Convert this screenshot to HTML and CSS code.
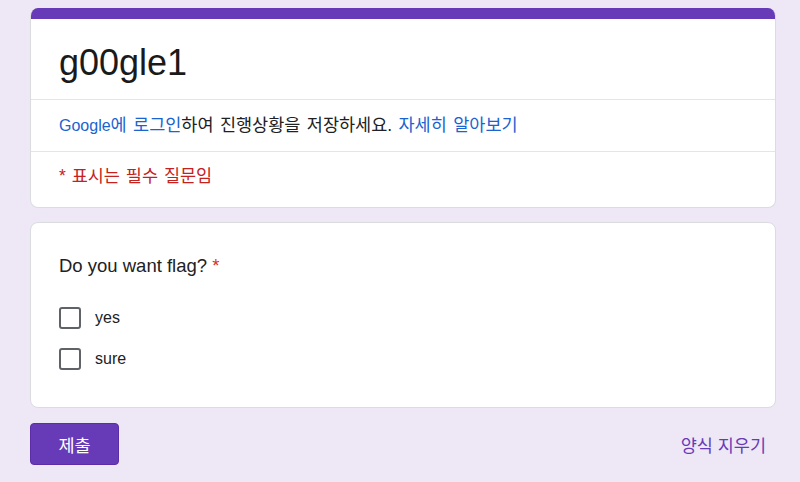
FILE: index.html
```html
<!DOCTYPE html>
<html lang="ko">
<head>
<meta charset="utf-8">
<title>g00gle1</title>
<link rel="stylesheet" href="styles.css">
</head>
<body>
<main class="form">
  <section class="card header-card">
    <div class="accent"></div>
    <div class="title-row">
      <h1 class="title">g00gle1</h1>
    </div>
    <div class="login-row">
      <a class="link" href="#"><span class="latin">Google</span>에 로그인</a>하여 진행상황을 저장하세요. <a class="link" href="#">자세히 알아보기</a>
    </div>
    <div class="required-row">* 표시는 필수 질문임</div>
  </section>

  <section class="card question-card">
    <div class="question">Do you want flag? <span class="star">*</span></div>
    <div class="options">
      <label class="option"><span class="box"></span><span class="opt-text">yes</span></label>
      <label class="option"><span class="box"></span><span class="opt-text">sure</span></label>
    </div>
  </section>

  <div class="actions">
    <button class="submit" type="button">제출</button>
    <a class="clear" href="#">양식 지우기</a>
  </div>
</main>
</body>
</html>
```

FILE: styles.css
```css
* { box-sizing: border-box; }

html, body {
  margin: 0;
  padding: 0;
  background: #ede7f6;
}

body {
  font-family: "Liberation Sans", Arial, "Noto Sans CJK KR", sans-serif;
  color: #202124;
  width: 800px;
  height: 482px;
  overflow: hidden;
}

.form {
  width: 746px;
  margin-left: 30px;
  padding-top: 8px;
  display: flex;
  flex-direction: column;
}

.card {
  background: #fff;
  border: 1px solid #dadce0;
  border-radius: 8px;
  overflow: hidden;
}

.header-card {
  border-top: 0;
}

.accent {
  height: 11px;
  background: #673ab7;
  margin: 0 -1px;
}

.title-row {
  padding: 20px 28px 12px;
  border-bottom: 1px solid #e5e4ea;
}

.title {
  margin: 0;
  font-size: 36px;
  line-height: 48px;
  font-weight: 400;
  color: #1a1a1a;
}

.login-row {
  padding: 13px 28px 13px;
  font-size: 17.5px;
  line-height: 24px;
  word-spacing: 1.5px;
  border-bottom: 1px solid #e5e4ea;
  color: #202124;
}

.latin {
  font-size: 16px;
}

.link {
  color: #1a63d0;
  text-decoration: none;
}

.required-row {
  padding: 12px 28px 19px;
  font-size: 17.5px;
  line-height: 24px;
  word-spacing: 1px;
  color: #c5221f;
}

.question-card {
  margin-top: 14px;
  padding: 31px 28px 37px;
}

.question {
  font-size: 18.5px;
  line-height: 24px;
  color: #202124;
}

.star {
  color: #d93025;
}

.options {
  margin-top: 29px;
  display: flex;
  flex-direction: column;
  gap: 19px;
}

.option {
  display: flex;
  align-items: center;
  gap: 14px;
  height: 22px;
  font-size: 16px;
  color: #202124;
}

.box {
  width: 22px;
  height: 22px;
  border: 2px solid #5f6368;
  border-radius: 3px;
  flex: none;
}

.actions {
  margin-top: 15px;
  display: flex;
  justify-content: space-between;
  align-items: center;
}

.submit {
  width: 89px;
  height: 42px;
  background: #673ab7;
  border: 1px solid #5b2ea8;
  border-radius: 4px;
  color: #fff;
  font-family: "Liberation Sans", Arial, "Noto Sans CJK KR", sans-serif;
  font-size: 17.5px;
  padding: 0;
}

.clear {
  color: #673ab7;
  font-size: 17.5px;
  text-decoration: none;
  margin-right: 10px;
}
```
